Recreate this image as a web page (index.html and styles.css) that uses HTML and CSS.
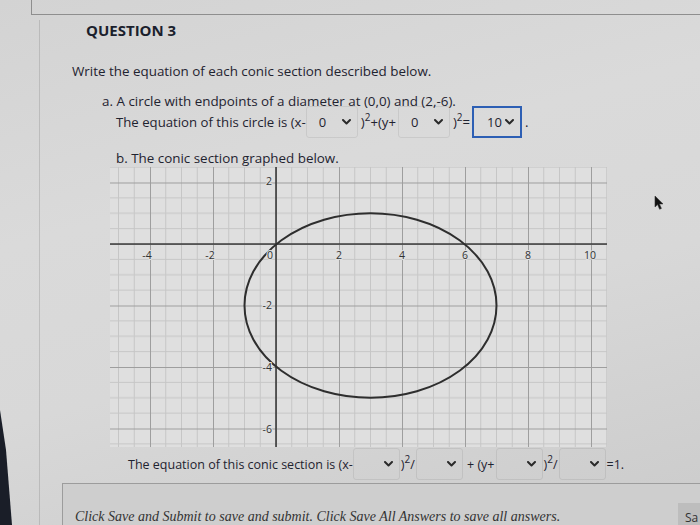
FILE: index.html
```html
<!DOCTYPE html>
<html>
<head>
<meta charset="utf-8">
<link rel="stylesheet" href="styles.css">
</head>
<body>
<div class="topframe"></div>
<div class="page">
  <h2 class="qtitle">QUESTION 3</h2>
  <p class="instr">Write the equation of each conic section described below.</p>
  <p class="parta">a. A circle with endpoints of a diameter at (0,0) and (2,-6).</p>
  <div class="eqrow eq1">
    <span class="txt">The equation of this circle is (x-</span>
    <span class="sel"><span class="val">0</span><svg class="chev" viewBox="0 0 9 6"><polyline points="1,1 4.5,4.5 8,1"/></svg></span>
    <span class="txt">)<sup>2</sup>+(y+</span>
    <span class="sel"><span class="val">0</span><svg class="chev" viewBox="0 0 9 6"><polyline points="1,1 4.5,4.5 8,1"/></svg></span>
    <span class="txt">)<sup>2</sup>=</span>
    <span class="sel active"><span class="val">10</span><svg class="chev" viewBox="0 0 9 6"><polyline points="1,1 4.5,4.5 8,1"/></svg></span>
    <span class="txt">.</span>
  </div>
  <p class="partb">b. The conic section graphed below.</p>
  <svg class="graph" width="497" height="280" viewBox="0 0 497 280">
    <defs>
      <pattern id="grid" patternUnits="userSpaceOnUse" x="40" y="15.5" width="63" height="61.5">
        <rect x="15.25" y="0" width="1" height="61.5" fill="#c6c6c6"/>
        <rect x="31" y="0" width="1" height="61.5" fill="#c6c6c6"/>
        <rect x="46.75" y="0" width="1" height="61.5" fill="#c6c6c6"/>
        <rect x="0" y="14.9" width="63" height="1" fill="#c6c6c6"/>
        <rect x="0" y="30.25" width="63" height="1" fill="#c6c6c6"/>
        <rect x="0" y="45.6" width="63" height="1" fill="#c6c6c6"/>
        <rect x="0" y="0" width="1" height="61.5" fill="#9e9e9e"/>
        <rect x="0" y="0" width="63" height="1" fill="#9e9e9e"/>
      </pattern>
    </defs>
    <rect x="0" y="0" width="497" height="280" fill="#dfdfdf"/>
    <rect x="0" y="0" width="497" height="280" fill="url(#grid)"/>
    <line x1="0" y1="77" x2="497" y2="77" stroke="#3c3c3c" stroke-width="1.6"/>
    <line x1="166" y1="0" x2="166" y2="280" stroke="#3c3c3c" stroke-width="1.6"/>
    <ellipse cx="260.5" cy="138.5" rx="126" ry="92.25" fill="none" stroke="#2e2e2e" stroke-width="2"/>
    <g class="lbl" text-anchor="middle">
      <text x="37" y="92">-4</text>
      <text x="100" y="92">-2</text>
      <text x="160" y="92">0</text>
      <text x="229" y="92">2</text>
      <text x="292" y="92">4</text>
      <text x="355" y="92">6</text>
      <text x="418" y="92">8</text>
      <text x="480" y="92">10</text>
    </g>
    <g class="lbl" text-anchor="end">
      <text x="162" y="18">2</text>
      <text x="162" y="142">-2</text>
      <text x="162" y="204">-4</text>
      <text x="162" y="266">-6</text>
    </g>
  </svg>
  <div class="eqrow eq2">
    <span class="txt">The equation of this conic section is (x-</span>
    <span class="sel empty"><svg class="chev" viewBox="0 0 9 6"><polyline points="1,1 4.5,4.5 8,1"/></svg></span>
    <span class="txt">)<sup>2</sup>/</span>
    <span class="sel empty"><svg class="chev" viewBox="0 0 9 6"><polyline points="1,1 4.5,4.5 8,1"/></svg></span>
    <span class="txt">&nbsp;+ (y+</span>
    <span class="sel empty"><svg class="chev" viewBox="0 0 9 6"><polyline points="1,1 4.5,4.5 8,1"/></svg></span>
    <span class="txt">)<sup>2</sup>/</span>
    <span class="sel empty"><svg class="chev" viewBox="0 0 9 6"><polyline points="1,1 4.5,4.5 8,1"/></svg></span>
    <span class="txt">=1.</span>
  </div>
  <div class="panel">
    <span class="note">Click Save and Submit to save and submit. Click Save All Answers to save all answers.</span>
    <span class="savebtn">Sa</span>
  </div>
</div>
<svg class="cursor" width="12" height="16" viewBox="0 0 12 16"><path d="M1 1 L1 12 L3.6 9.6 L5.6 14.2 L7.4 13.4 L5.4 8.9 L9 8.9 Z" fill="#111" stroke="#333" stroke-width="0.6"/></svg>
<div class="bezel"></div>
</body>
</html>
```

FILE: styles.css
```css
html, body {
  margin: 0;
  padding: 0;
}
body {
  width: 700px;
  height: 525px;
  overflow: hidden;
  position: relative;
  font-family: "Open Sans", "Liberation Sans", sans-serif;
  color: #1f2330;
  background: linear-gradient(165deg, #d3d3d3 0%, #dadada 35%, #d8d8d8 60%, #cbcbcb 100%);
}
.topframe {
  margin-left: 31px;
  height: 14px;
  border-left: 1px solid #8e8e8e;
  border-bottom: 1px solid #8e8e8e;
}
.page {
  margin-left: 39px;
  border-left: 1px solid rgba(0, 0, 0, 0.12);
  height: 600px;
}
.qtitle {
  margin: 5px 0 0 46px;
  font-size: 15px;
  line-height: 20px;
  font-weight: 700;
  color: #1b1f2d;
}
.instr, .parta, .partb {
  margin: 0;
  font-size: 13.4px;
  line-height: 18px;
  white-space: nowrap;
}
.instr {
  margin-top: 22px;
  padding-left: 32px;
}
.parta {
  margin-top: 12px;
  padding-left: 62px;
}
.eqrow {
  display: flex;
  align-items: center;
  height: 32px;
  font-size: 13px;
  white-space: nowrap;
}
.eqrow > * {
  flex-shrink: 0;
}
.eq1 {
  margin-top: -4px;
  padding-left: 76px;
  font-size: 13.2px;
}
.eq1 .sel + .txt {
  padding: 0 2px 0 3px;
}
.eq2 {
  margin-top: 1px;
  padding-left: 88px;
  font-size: 12.5px;
}
.eq2 .sel + .txt {
  padding: 0 1px;
}
.txt sup {
  font-size: 10px;
  line-height: 0;
  vertical-align: 6px;
}
.sel {
  display: inline-flex;
  align-items: center;
  justify-content: space-between;
  box-sizing: border-box;
  width: 50px;
  height: 32px;
  padding: 0 6px 0 12px;
  border: 1px solid rgba(0, 0, 0, 0.07);
  border-radius: 3px;
  font-size: 13px;
}
.eq1 .sel {
  width: 52px;
}
.sel.empty {
  justify-content: flex-end;
  width: 47px;
}
.sel.active {
  border: 2px solid #2d5fb4;
  border-radius: 0;
  padding-left: 13px;
  width: 50px;
}
.chev {
  width: 9px;
  height: 6px;
  fill: none;
  stroke: #2a2a2a;
  stroke-width: 2;
  stroke-linecap: round;
  stroke-linejoin: round;
}
.partb {
  margin-top: 11px;
  padding-left: 76px;
}
.graph {
  display: block;
  margin-left: 70px;
}
.lbl text {
  font-family: "Open Sans", "Liberation Sans", sans-serif;
  font-size: 10.5px;
  fill: #333;
  paint-order: stroke;
  stroke: #dfdfdf;
  stroke-width: 2px;
}
.panel {
  margin-top: 3px;
  margin-left: 22px;
  width: 640px;
  height: 80px;
  box-sizing: border-box;
  border-top: 1px solid #9c9c9c;
  border-left: 1px solid #9c9c9c;
  background: #cecece;
  display: flex;
  justify-content: space-between;
  align-items: flex-start;
}
.note {
  margin-top: 24px;
  padding-left: 12px;
  font-family: "Liberation Serif", serif;
  font-style: italic;
  font-size: 14px;
  line-height: 18px;
  color: #333;
  white-space: nowrap;
}
.savebtn {
  margin-top: 19px;
  width: 24px;
  height: 40px;
  box-sizing: border-box;
  padding: 6px 0 0 7px;
  background: #bdbdbd;
  font-size: 12px;
  color: #333;
}
.cursor {
  position: absolute;
  left: 654px;
  top: 195px;
}
.bezel {
  position: absolute;
  left: 0;
  top: 410px;
  width: 14px;
  height: 115px;
  background: #1a1e28;
  clip-path: polygon(0 0, 6px 40px, 12px 115px, 0 115px);
}
```
